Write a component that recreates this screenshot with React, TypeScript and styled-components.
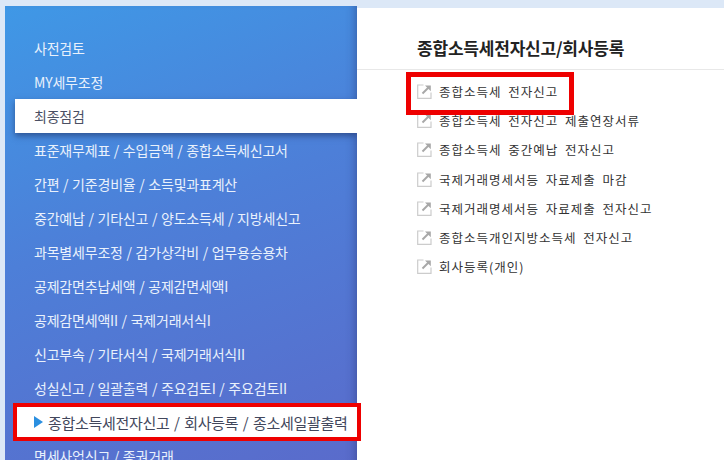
import React from "react";
import styled, { createGlobalStyle } from "styled-components";

const GlobalStyle = createGlobalStyle`
    html, body {
        margin: 0;
        padding: 0;
        height: 460px;
        overflow: hidden;
        background: #dce8f7;
    }
`;

const Page = styled.div`
    display: flex;
    width: 724px;
    height: 460px;
    padding: 6px 0 0 5px;
    box-sizing: border-box;
    overflow: hidden;
    font-family: "Noto Sans CJK KR", "Noto Sans", sans-serif;
`;

const Sidebar = styled.nav`
    flex: 0 0 352px;
    height: 460px;
    box-sizing: border-box;
    padding: 25px 0 0 10px;
    display: flex;
    flex-direction: column;
    background: linear-gradient(160deg, #3f98e6 0%, #4d7fd8 45%, #5a6bcb 100%);
    box-shadow: inset -8px 0 8px -6px rgba(40, 50, 110, 0.45);
`;

const MenuItem = styled.div<{ $active?: boolean }>`
    height: 34px;
    flex: 0 0 34px;
    display: flex;
    align-items: center;
    padding-left: 19px;
    font-size: 14px;
    letter-spacing: -0.2px;
    word-spacing: 0.8px;
    white-space: nowrap;
    color: ${props => (props.$active ? "#4a4f63" : "#e9f1fc")};
    background: ${props => (props.$active ? "#ffffff" : "transparent")};
    box-shadow: ${props => (props.$active ? "0 3px 6px rgba(25, 40, 90, 0.55)" : "none")};
`;

const MarkedItem = styled(MenuItem)`
    position: relative;
    z-index: 1;
    height: 30px;
    flex: 0 0 30px;
    margin: 2px 0 2px 2px;
    padding-left: 17px;
    gap: 5px;
    font-size: 15px;
    letter-spacing: -0.3px;
    word-spacing: 1.5px;
    color: #42475c;
    background: #ffffff;
    outline: 4px solid #ee0000;
`;

const Arrow = styled.span`
    width: 0;
    height: 0;
    border-style: solid;
    border-width: 6px 0 6px 9px;
    border-color: transparent transparent transparent #2b8fe0;
`;

const Content = styled.main`
    flex: 1;
    margin-top: 2px;
    background: #ffffff;
    position: relative;
`;

const Heading = styled.div`
    height: 62px;
    box-sizing: border-box;
    padding: 28px 0 0 60px;
    border-bottom: 1px solid #e8e8e8;
    font-size: 17px;
    font-weight: 700;
    letter-spacing: -0.2px;
    line-height: 24px;
    color: #222222;
`;

const LinkList = styled.ul`
    list-style: none;
    margin: 0;
    padding: 7px 0 0 60px;
`;

const LinkRow = styled.li`
    height: 29.2px;
    display: flex;
    align-items: center;
    gap: 7px;
    font-size: 12.5px;
    letter-spacing: 1px;
    word-spacing: 3px;
    color: #333333;
`;

const LinkBox = styled.span`
    position: absolute;
    left: 49px;
    top: 64px;
    width: 158px;
    height: 33px;
    border: 5px solid #ee0000;
    pointer-events: none;
`;

const LinkIcon = () => (
    <svg width="15" height="15" viewBox="0 0 15 15" fill="none">
        <path d="M6.5 1H.7v13.3H14V8.5" stroke="#cccccc" strokeWidth="1.2" />
        <path d="M5.5 9.5L11.5 3.5" stroke="#a8a8a8" strokeWidth="2" />
        <path d="M8 1.5h5.8v5.8z" fill="#a8a8a8" />
    </svg>
);

const menu = [
    "사전검토",
    "MY세무조정",
    "최종점검",
    "표준재무제표 / 수입금액 / 종합소득세신고서",
    "간편 / 기준경비율 / 소득및과표계산",
    "중간예납 / 기타신고 / 양도소득세 / 지방세신고",
    "과목별세무조정 / 감가상각비 / 업무용승용차",
    "공제감면추납세액 / 공제감면세액I",
    "공제감면세액II / 국제거래서식I",
    "신고부속 / 기타서식 / 국제거래서식II",
    "성실신고 / 일괄출력 / 주요검토I / 주요검토II",
];

const links = [
    "종합소득세 전자신고",
    "종합소득세 전자신고 제출연장서류",
    "종합소득세 중간예납 전자신고",
    "국제거래명세서등 자료제출 마감",
    "국제거래명세서등 자료제출 전자신고",
    "종합소득개인지방소득세 전자신고",
    "회사등록(개인)",
];

const App = () => (
    <Page>
        <GlobalStyle />
        <Sidebar>
            {menu.map(label => (
                <MenuItem key={label} $active={label === "최종점검"}>
                    {label}
                </MenuItem>
            ))}
            <MarkedItem>
                <Arrow />
                종합소득세전자신고 / 회사등록 / 종소세일괄출력
            </MarkedItem>
            <MenuItem>면세사업신고 / 종권거래</MenuItem>
        </Sidebar>
        <Content>
            <Heading>종합소득세전자신고/회사등록</Heading>
            <LinkList>
                {links.map(label => (
                    <LinkRow key={label}>
                        <LinkIcon />
                        {label}
                    </LinkRow>
                ))}
            </LinkList>
            <LinkBox />
        </Content>
    </Page>
);

export default App;
